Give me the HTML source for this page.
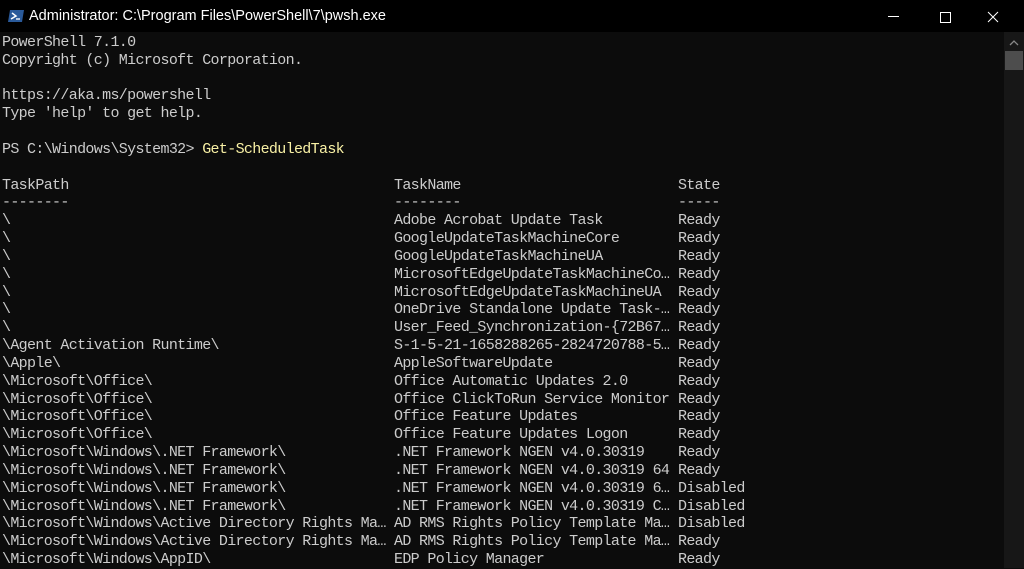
<!DOCTYPE html>
<html><head><meta charset="utf-8"><style>
html,body{margin:0;padding:0;width:1024px;height:568px;overflow:hidden;background:#0c0c0c}
.tb{position:absolute;left:0;top:0;width:1024px;height:32px;background:#000;color:#fff;font:14px "Liberation Sans",sans-serif}
.tb .t{position:absolute;left:29px;top:8px;font-size:14.5px}
.con{position:absolute;left:2px;top:34px;font:15px/17.83px "Liberation Mono",monospace;letter-spacing:-0.66px;color:#cccccc}
.con div{height:17.83px;white-space:pre}
.a{display:inline-block;width:392px}
.b{display:inline-block;width:284px}
.y{color:#f9f1a5}
.sb{position:absolute;left:1004px;top:32px;width:20px;height:536px;background:#171717}
.th{position:absolute;left:1005px;top:51px;width:18px;height:19px;background:#4d4d4d}
</style></head><body>
<div class="tb">
<svg style="position:absolute;left:8px;top:9px" width="16" height="14" viewBox="0 0 16 14"><path d="M2 1h14l-2 12H0z" fill="#2a5a9a"/><path d="M4 4l4 3-5 3" stroke="#fff" stroke-width="1.5" fill="none"/><path d="M8 10h4" stroke="#fff" stroke-width="1.3"/></svg>
<span class="t">Administrator: C:\Program Files\PowerShell\7\pwsh.exe</span>
<svg style="position:absolute;left:880px;top:10px" width="140" height="14"><path d="M8 6.5h11" stroke="#fff" stroke-width="1"/><path d="M60.5 2.5h10v10h-10z" stroke="#fff" fill="none"/><path d="M108 2l10 10M118 2l-10 10" stroke="#fff"/></svg>
</div>
<div class="sb"></div>
<svg style="position:absolute;left:1008px;top:39px" width="12" height="8"><path d="M2 6l4-4 4 4" stroke="#888" fill="none" stroke-width="1.3"/></svg>
<div class="th"></div>
<div class="con"><div>PowerShell 7.1.0</div><div>Copyright (c) Microsoft Corporation.</div><div></div><div>https://aka.ms/powershell</div><div>Type 'help' to get help.</div><div></div><div>PS C:\Windows\System32&gt; <span class="y">Get-ScheduledTask</span></div><div></div><div><span class="a">TaskPath</span><span class="b">TaskName</span>State</div><div><span class="a">--------</span><span class="b">--------</span>-----</div><div><span class="a">\</span><span class="b">Adobe Acrobat Update Task</span>Ready</div><div><span class="a">\</span><span class="b">GoogleUpdateTaskMachineCore</span>Ready</div><div><span class="a">\</span><span class="b">GoogleUpdateTaskMachineUA</span>Ready</div><div><span class="a">\</span><span class="b">MicrosoftEdgeUpdateTaskMachineCo…</span>Ready</div><div><span class="a">\</span><span class="b">MicrosoftEdgeUpdateTaskMachineUA</span>Ready</div><div><span class="a">\</span><span class="b">OneDrive Standalone Update Task-…</span>Ready</div><div><span class="a">\</span><span class="b">User_Feed_Synchronization-{72B67…</span>Ready</div><div><span class="a">\Agent Activation Runtime\</span><span class="b">S-1-5-21-1658288265-2824720788-5…</span>Ready</div><div><span class="a">\Apple\</span><span class="b">AppleSoftwareUpdate</span>Ready</div><div><span class="a">\Microsoft\Office\</span><span class="b">Office Automatic Updates 2.0</span>Ready</div><div><span class="a">\Microsoft\Office\</span><span class="b">Office ClickToRun Service Monitor</span>Ready</div><div><span class="a">\Microsoft\Office\</span><span class="b">Office Feature Updates</span>Ready</div><div><span class="a">\Microsoft\Office\</span><span class="b">Office Feature Updates Logon</span>Ready</div><div><span class="a">\Microsoft\Windows\.NET Framework\</span><span class="b">.NET Framework NGEN v4.0.30319</span>Ready</div><div><span class="a">\Microsoft\Windows\.NET Framework\</span><span class="b">.NET Framework NGEN v4.0.30319 64</span>Ready</div><div><span class="a">\Microsoft\Windows\.NET Framework\</span><span class="b">.NET Framework NGEN v4.0.30319 6…</span>Disabled</div><div><span class="a">\Microsoft\Windows\.NET Framework\</span><span class="b">.NET Framework NGEN v4.0.30319 C…</span>Disabled</div><div><span class="a">\Microsoft\Windows\Active Directory Rights Ma…</span><span class="b">AD RMS Rights Policy Template Ma…</span>Disabled</div><div><span class="a">\Microsoft\Windows\Active Directory Rights Ma…</span><span class="b">AD RMS Rights Policy Template Ma…</span>Ready</div><div><span class="a">\Microsoft\Windows\AppID\</span><span class="b">EDP Policy Manager</span>Ready</div></div>
</body></html>
